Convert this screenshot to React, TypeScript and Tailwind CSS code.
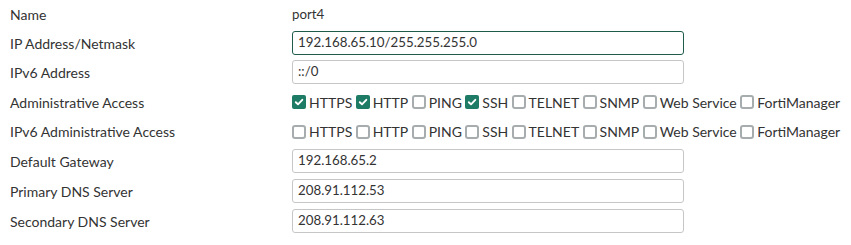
import React from "react";

const font = { fontFamily: "Lato, 'Noto Sans', sans-serif" };

function Check({ checked, label }: { checked: boolean; label: string }) {
  return (
    <span className="flex items-center">
      {checked ? (
        <span className="w-[14px] h-[14px] rounded-[2px] bg-[#1e7b65] flex items-center justify-center mr-[3px]">
          <svg width="10" height="10" viewBox="0 0 10 10">
            <path d="M1.8 5.2 L4 7.3 L8.3 2.8" fill="none" stroke="white" strokeWidth="1.9" strokeLinecap="round" strokeLinejoin="round" />
          </svg>
        </span>
      ) : (
        <span className="w-[14px] h-[14px] rounded-[3px] border-2 border-[#a7adaf] bg-white mr-[3px]" />
      )}
      <span className="mr-[3.4px]">{label}</span>
    </span>
  );
}

const opts = ["HTTPS", "HTTP", "PING", "SSH", "TELNET", "SNMP", "Web Service", "FortiManager"];

function Row({ label, h, children }: { label: string; h: string; children: React.ReactNode }) {
  return (
    <div className={"flex items-center " + h}>
      <div className="w-[282px] shrink-0">{label}</div>
      <div className="flex-1 flex items-center">{children}</div>
    </div>
  );
}

function Input({ value, focused }: { value: string; focused?: boolean }) {
  return (
    <div
      className={
        "w-[392px] h-[24px] rounded-[3px] border px-[5px] flex items-center bg-white text-[13.3px] " +
        (focused ? "border-[#1f5c4c]" : "border-[#c6c6c6]")
      }
    >
      {value}
    </div>
  );
}

export default function App() {
  return (
    <div className="w-[851px] h-[245px] bg-white text-[14px] text-[#333333] pl-[10px]" style={font}>
      <Row label="Name" h="h-[29px]">
        <span className="text-[13.3px]">port4</span>
      </Row>
      <Row label="IP Address/Netmask" h="h-[28px]">
        <Input value="192.168.65.10/255.255.255.0" focused />
      </Row>
      <Row label="IPv6 Address" h="h-[30px]">
        <Input value="::/0" />
      </Row>
      <Row label="Administrative Access" h="h-[30px]">
        {opts.map((o) => (
          <Check key={o} label={o} checked={o === "HTTPS" || o === "HTTP" || o === "SSH"} />
        ))}
      </Row>
      <Row label="IPv6 Administrative Access" h="h-[29px]">
        {opts.map((o) => (
          <Check key={o} label={o} checked={false} />
        ))}
      </Row>
      <Row label="Default Gateway" h="h-[30px]">
        <Input value="192.168.65.2" />
      </Row>
      <Row label="Primary DNS Server" h="h-[30px]">
        <Input value="208.91.112.53" />
      </Row>
      <Row label="Secondary DNS Server" h="h-[30px]">
        <Input value="208.91.112.63" />
      </Row>
    </div>
  );
}
